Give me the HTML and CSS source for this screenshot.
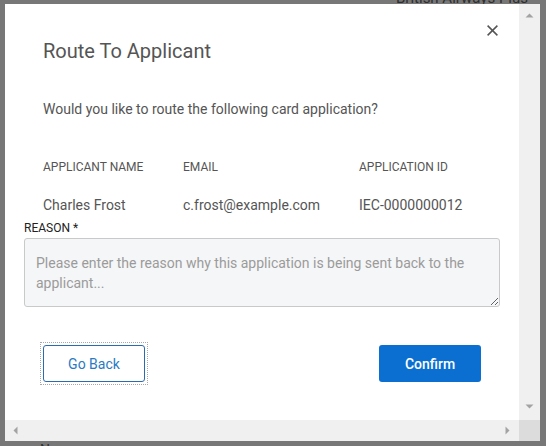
FILE: index.html
```html
<!DOCTYPE html>
<html lang="en">
<head>
<meta charset="utf-8">
<title>Route To Applicant</title>
<link rel="stylesheet" href="styles.css">
</head>
<body>
  <div class="backdrop">
    <div class="backdrop-top"><span class="bg-title">British Airways Plus</span></div>
    <div class="backdrop-bottom"><span class="bg-frag">Name</span></div>
  </div>

  <div class="modal" role="dialog" aria-labelledby="dlg-title">
    <div class="modal-body">
      <div class="close-row">
        <button class="close-btn" aria-label="Close">
          <svg width="11" height="11" viewBox="0 0 11 11"><path d="M0.6 0.6 L10.4 10.4 M10.4 0.6 L0.6 10.4" stroke="#555" stroke-width="1.5" fill="none"/></svg>
        </button>
      </div>
      <h1 class="title" id="dlg-title">Route To Applicant</h1>
      <p class="intro">Would you like to route the following card application?</p>
      <div class="details">
        <div class="th">Applicant Name</div>
        <div class="th">Email</div>
        <div class="th">Application ID</div>
        <div class="td">Charles Frost</div>
        <div class="td">c.frost@example.com</div>
        <div class="td">IEC-0000000012</div>
      </div>
      <label class="field-label" for="reason">REASON *</label>
      <textarea id="reason" class="reason" placeholder="Please enter the reason why this application is being sent back to the applicant..."></textarea>
      <div class="actions">
        <span class="focus-ring"><button class="btn btn-secondary">Go Back</button></span>
        <button class="btn btn-primary">Confirm</button>
      </div>
    </div>
    <div class="vscroll">
      <svg width="9" height="5" viewBox="0 0 9 5"><path d="M0.5 4.5 L4.5 0.5 L8.5 4.5 Z" fill="#a3a3a3"/></svg>
      <svg width="9" height="5" viewBox="0 0 9 5"><path d="M0.5 0.5 L4.5 4.5 L8.5 0.5 Z" fill="#a3a3a3"/></svg>
    </div>
    <div class="hscroll">
      <svg width="5" height="9" viewBox="0 0 5 9"><path d="M4.5 0.5 L0.5 4.5 L4.5 8.5 Z" fill="#a3a3a3"/></svg>
      <svg width="5" height="9" viewBox="0 0 5 9"><path d="M0.5 0.5 L4.5 4.5 L0.5 8.5 Z" fill="#a3a3a3"/></svg>
    </div>
    <div class="corner"></div>
  </div>
</body>
</html>
```

FILE: styles.css
```css
html, body {
  margin: 0;
  padding: 0;
  height: 446px;
  overflow: hidden;
}

body {
  background: #777777;
  font-family: Roboto, "Liberation Sans", Arial, sans-serif;
  position: relative;
}

.backdrop {
  height: 446px;
  display: flex;
  flex-direction: column;
  justify-content: space-between;
}

.backdrop-top {
  display: flex;
  justify-content: flex-end;
  padding-right: 18px;
  margin-top: -12px;
}

.bg-title {
  font-size: 15px;
  line-height: 20px;
  color: #2e2e2e;
}

.backdrop-bottom {
  padding-left: 40px;
  margin-bottom: -14px;
}

.bg-frag {
  font-size: 14px;
  line-height: 20px;
  color: #2e2e2e;
}

.modal {
  position: absolute;
  left: 5px;
  top: 4px;
  width: 535px;
  height: 437px;
  background: #ffffff;
  display: grid;
  grid-template-columns: 514px 21px;
  grid-template-rows: 416px 21px;
}

.modal-body {
  overflow: hidden;
  padding: 0 19px;
  display: flex;
  flex-direction: column;
}

.close-row {
  display: flex;
  justify-content: flex-end;
  padding-top: 21px;
  padding-right: 2px;
}

.close-btn {
  border: 0;
  background: transparent;
  padding: 0;
  width: 11px;
  height: 11px;
  display: block;
  cursor: pointer;
}

.close-btn svg {
  display: block;
}

.title {
  margin: 3px 0 0 19px;
  font-size: 20px;
  line-height: 24px;
  font-weight: 400;
  color: #555555;
}

.intro {
  margin: 36px 0 0 19px;
  font-size: 14px;
  line-height: 20px;
  color: #555555;
}

.details {
  margin: 40px 0 0 19px;
  display: grid;
  grid-template-columns: 140px 176px auto;
  row-gap: 20px;
}

.th {
  font-size: 12px;
  line-height: 16px;
  text-transform: uppercase;
  color: #555555;
}

.td {
  font-size: 14px;
  line-height: 20px;
  color: #555555;
}

.field-label {
  margin-top: 5px;
  font-size: 12px;
  line-height: 16px;
  color: #222222;
}

.reason {
  margin-top: 2px;
  box-sizing: border-box;
  width: 476px;
  height: 69px;
  border: 1px solid #c9c9c9;
  border-radius: 3px;
  background: #f5f6f7;
  padding: 14px 11px 13px;
  font-family: Roboto, "Liberation Sans", Arial, sans-serif;
  font-size: 14px;
  line-height: 20px;
  color: #333333;
  resize: vertical;
}

.reason::placeholder {
  color: #9b9b9b;
}

.actions {
  margin-top: 38px;
  padding: 0 19px;
  display: flex;
  justify-content: space-between;
  align-items: flex-start;
}

.focus-ring {
  display: block;
  margin: -3px 0 0 -3px;
  padding: 2px;
  border: 1px dotted #a8a8a8;
}

.btn {
  box-sizing: border-box;
  display: block;
  width: 102px;
  height: 37px;
  border-radius: 3px;
  font-family: Roboto, "Liberation Sans", Arial, sans-serif;
  font-size: 14px;
  cursor: pointer;
}

.btn-secondary {
  background: #ffffff;
  border: 1px solid #2b6cb0;
  color: #2a7ac2;
  outline: none;
}

.btn-primary {
  background: #0a6fd0;
  border: 0;
  color: #ffffff;
  font-weight: 500;
}

.vscroll {
  background: #f0f0f0;
  display: flex;
  flex-direction: column;
  justify-content: space-between;
  align-items: center;
  padding: 9px 0 11px;
}

.vscroll svg, .hscroll svg {
  display: block;
}

.hscroll {
  background: #f0f0f0;
  display: flex;
  justify-content: space-between;
  align-items: center;
  padding: 0 9px 0 8px;
}

.corner {
  background: #dcdcdc;
}
```
